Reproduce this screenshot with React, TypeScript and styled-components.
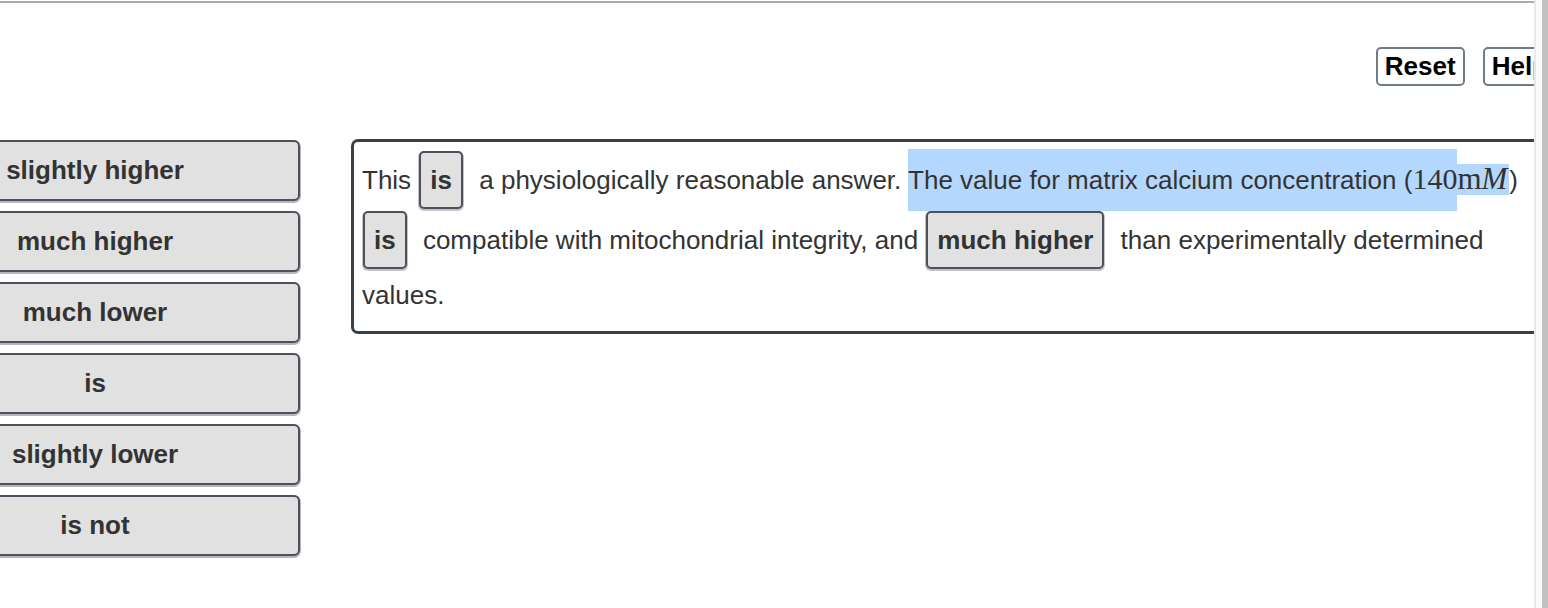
import styled, { createGlobalStyle } from "styled-components";

const GlobalStyle = createGlobalStyle`
  html, body {
    margin: 0;
    padding: 0;
    background: #ffffff;
    overflow: hidden;
  }
  body {
    font-family: "Liberation Sans", Helvetica, Arial, sans-serif;
  }
`;

const Page = styled.div`
  display: flex;
  width: 1548px;
  height: 608px;
`;

const MainColumn = styled.div`
  width: 1534px;
  height: 608px;
  overflow: hidden;
`;

const ScrollTrack = styled.div`
  flex: 1;
  display: flex;
  border-left: 2px solid #e8e8e8;
  background: #fafafa;
`;

const ScrollThumb = styled.div`
  margin-left: 6px;
  flex: 1;
  background: #c1c1c1;
`;

const TopRule = styled.div`
  margin-top: 1px;
  height: 2px;
  background: #ababab;
`;

const Toolbar = styled.div`
  display: flex;
  justify-content: flex-end;
  gap: 18px;
  padding-top: 44px;
  margin-right: -23px;
`;

const ToolButton = styled.button`
  height: 39px;
  box-sizing: border-box;
  padding: 0 7px;
  border: 2px solid #6f7c85;
  border-radius: 5px;
  background: #ffffff;
  color: #000000;
  font-family: "Liberation Sans", Helvetica, Arial, sans-serif;
  font-size: 26px;
  font-weight: bold;
  line-height: 35px;
  cursor: pointer;
`;

const Workspace = styled.div`
  display: flex;
  align-items: flex-start;
  gap: 51px;
  margin-top: 53px;
`;

const ChoiceBank = styled.div`
  display: flex;
  flex-direction: column;
  gap: 10px;
  width: 300px;
  margin-top: 1px;
  flex-shrink: 0;
`;

const BankChip = styled.div`
  width: 410px;
  height: 61px;
  margin-left: -110px;
  box-sizing: border-box;
  display: flex;
  align-items: center;
  justify-content: center;
  border: 2px solid #4f505b;
  border-radius: 6px;
  background: #e1e1e1;
  box-shadow: 0 1px 0 1px rgba(120, 120, 140, 0.55);
  color: #333333;
  font-size: 26px;
  font-weight: bold;
`;

const AnswerBox = styled.div`
  width: 1205px;
  flex-shrink: 0;
  box-sizing: border-box;
  border: 3px solid #3a4146;
  border-radius: 7px;
  padding: 8px 8px 11px;
  color: #333333;
  font-size: 26px;
  line-height: 50px;
`;

const Blank = styled.span`
  display: inline-block;
  height: 58px;
  box-sizing: border-box;
  margin: 1px 9px 1px 1px;
  padding: 0 9px;
  border: 2px solid #4f505b;
  border-radius: 5px;
  background: #e1e1e1;
  box-shadow: 0 1px 0 1px rgba(120, 120, 140, 0.45);
  font-weight: bold;
  line-height: 54px;
  vertical-align: baseline;
`;

const Selected = styled.span`
  background: #b4d7fd;
  padding: 16px 0;
`;

const MathSelected = styled.span`
  background: #b4d7fd;
  padding-top: 1px;
`;

const MathNum = styled.span`
  font-family: "Liberation Serif", "Times New Roman", serif;
  font-size: 30px;
`;

const MathRoman = styled.span`
  font-family: "Liberation Serif", "Times New Roman", serif;
  font-size: 31px;
`;

const MathItalic = styled.span`
  font-family: "Liberation Serif", "Times New Roman", serif;
  font-size: 31px;
  font-style: italic;
  padding-right: 2px;
`;

const bankItems = [
  "slightly higher",
  "much higher",
  "much lower",
  "is",
  "slightly lower",
  "is not",
];

export default function App() {
  return (
    <>
      <GlobalStyle />
      <Page>
        <MainColumn>
          <TopRule />
          <Toolbar>
            <ToolButton>Reset</ToolButton>
            <ToolButton>Help</ToolButton>
          </Toolbar>
          <Workspace>
            <ChoiceBank>
              {bankItems.map((item) => (
                <BankChip key={item}>{item}</BankChip>
              ))}
            </ChoiceBank>
            <AnswerBox>
              This <Blank>is</Blank> a physiologically reasonable answer.{" "}
              <Selected>
                The value for matrix calcium concentration (<MathNum>140</MathNum>
              </Selected>
              <MathSelected>
                <MathRoman>m</MathRoman>
                <MathItalic>M</MathItalic>
              </MathSelected>
              ) <Blank>is</Blank> compatible with mitochondrial integrity, and{" "}
              <Blank>much higher</Blank> than experimentally determined values.
            </AnswerBox>
          </Workspace>
        </MainColumn>
        <ScrollTrack>
          <ScrollThumb />
        </ScrollTrack>
      </Page>
    </>
  );
}
